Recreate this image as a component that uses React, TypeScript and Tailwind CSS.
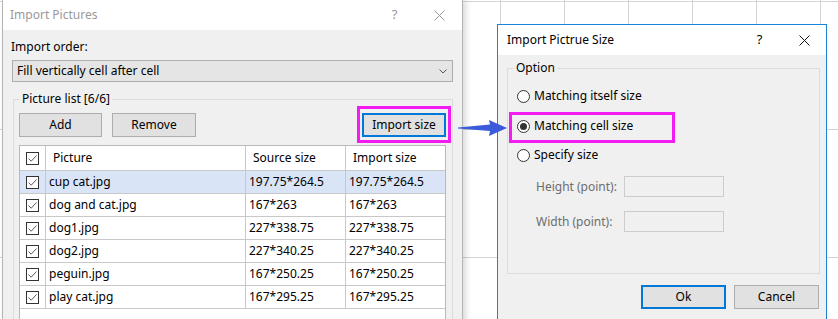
const ROWS = [
  { name: 'cup cat.jpg', source: '197.75*264.5', size: '197.75*264.5' },
  { name: 'dog and cat.jpg', source: '167*263', size: '167*263' },
  { name: 'dog1.jpg', source: '227*338.75', size: '227*338.75' },
  { name: 'dog2.jpg', source: '227*340.25', size: '227*340.25' },
  { name: 'peguin.jpg', source: '167*250.25', size: '167*250.25' },
  { name: 'play cat.jpg', source: '167*295.25', size: '167*295.25' },
];

const FONT = "font-['Noto_Sans','Open_Sans',sans-serif]";

function CheckBox() {
  return (
    <span className="flex h-[13px] w-[13px] items-center justify-center border border-[#333333] bg-white">
      <svg width="11" height="11" viewBox="0 0 11 11">
        <path d="M1.5 5.5 L4.2 8.2 L9.5 2.5" fill="none" stroke="#5a5a5a" strokeWidth="1" />
      </svg>
    </span>
  );
}

function Radio({ checked }: { checked?: boolean }) {
  return (
    <span className="flex h-[13px] w-[13px] shrink-0 items-center justify-center rounded-full border border-[#333333] bg-white">
      {checked && <span className="h-[7px] w-[7px] rounded-full bg-[#333333]" />}
    </span>
  );
}

function CloseIcon({ color }: { color: string }) {
  return (
    <svg width="11" height="11" viewBox="0 0 11 11">
      <path d="M0.5 0.5 L10.5 10.5 M10.5 0.5 L0.5 10.5" stroke={color} strokeWidth="1" />
    </svg>
  );
}

function Button({ label, active, width }: { label: string; active?: boolean; width: string }) {
  return (
    <div
      className={`flex h-[24px] ${width} items-center justify-center bg-[#e1e1e1] text-[12px] text-black ${
        active ? 'border-2 border-[#0078d7]' : 'border border-[#adadad]'
      }`}
    >
      {label}
    </div>
  );
}

/** Background spreadsheet grid, drawn behind the dialogs */
function SheetGrid() {
  const cols = [500, 564, 628, 692, 756, 820];
  const rows = [1, 129, 257];
  return (
    <svg className="absolute inset-0" width="838" height="319">
      {cols.map((x) => (
        <line key={x} x1={x + 0.5} y1="0" x2={x + 0.5} y2="319" stroke="#d4d4d4" />
      ))}
      {rows.map((y) => (
        <line key={y} x1="0" y1={y + 0.5} x2="838" y2={y + 0.5} stroke="#d4d4d4" />
      ))}
    </svg>
  );
}

function ImportPicturesDialog() {
  return (
    <div className="absolute left-[2px] top-0 flex h-[340px] w-[461px] flex-col border-x border-[#b4b4b4] bg-[#f0f0f0] shadow-[3px_0_6px_rgba(0,0,0,0.15)]">
      <div className="flex h-[30px] shrink-0 items-center bg-white">
        <span className="pl-[7px] text-[12px] text-[#999999]">Import Pictures</span>
        <span className="ml-auto flex w-[45px] justify-center text-[13px] text-[#999999]">?</span>
        <span className="flex w-[45px] justify-center">
          <CloseIcon color="#999999" />
        </span>
      </div>

      <div className="pl-[8px] pt-[9px] text-[12px] leading-[16px] text-black">Import order:</div>
      <div className="ml-[9px] mt-[5px] flex h-[22px] w-[441px] items-center border border-[#adadad] bg-[#e5e5e5] pl-[4px] text-[12px] text-black">
        Fill vertically cell after cell
        <svg className="ml-auto mr-[5px]" width="8" height="5" viewBox="0 0 8 5">
          <path d="M0.5 0.5 L4 4 L7.5 0.5" fill="none" stroke="#555555" strokeWidth="1" />
        </svg>
      </div>

      <div className="relative ml-[10px] mt-[17px] flex w-[440px] flex-1 flex-col border border-[#dcdcdc] pl-[5px] pr-[5px] pt-[13px]">
        <span className="absolute left-[6px] top-[-9px] bg-[#f0f0f0] px-[2px] text-[12px] leading-[16px] text-black">
          Picture list [6/6]
        </span>
        <div className="flex items-center">
          <Button label="Add" width="w-[83px]" />
          <div className="ml-[10px]">
            <Button label="Remove" width="w-[84px]" />
          </div>
          <div className="ml-auto mr-[1px]">
            <Button label="Import size" active width="w-[84px]" />
          </div>
        </div>

        <div className="mt-[8px] flex w-[427px] flex-1 flex-col border border-[#b9b9b9] bg-white text-[12px] text-black">
          <div className="flex h-[25px] border-b border-[#c8c8c8]">
            <div className="flex w-[26px] items-center justify-center border-r border-[#c8c8c8]">
              <CheckBox />
            </div>
            <div className="flex w-[200px] items-center border-r border-[#c8c8c8] pl-[7px]">Picture</div>
            <div className="flex w-[100px] items-center border-r border-[#c8c8c8] pl-[7px]">Source size</div>
            <div className="flex flex-1 items-center pl-[7px]">Import size</div>
          </div>
          {ROWS.map((r, i) => (
            <div key={r.name} className={`flex h-[23px] border-b border-[#c8c8c8] ${i === 0 ? 'bg-[#d9e5f7]' : ''}`}>
              <div className="flex w-[26px] items-center justify-center border-r border-[#c8c8c8]">
                <CheckBox />
              </div>
              <div className="flex w-[200px] items-center border-r border-[#c8c8c8] pl-[3px]">{r.name}</div>
              <div className="flex w-[100px] items-center border-r border-[#c8c8c8] pl-[3px]">{r.source}</div>
              <div className="flex flex-1 items-center pl-[3px]">{r.size}</div>
            </div>
          ))}
        </div>
      </div>
    </div>
  );
}

function SizeDialog() {
  return (
    <div className="absolute left-[497px] top-[24px] flex h-[310px] w-[330px] flex-col border border-[#1883d7] bg-[#f0f0f0] text-[12px] text-black">
      <div className="flex h-[30px] shrink-0 items-center bg-white">
        <span className="pl-[9px]">Import Pictrue Size</span>
        <span className="ml-auto flex w-[45px] justify-center text-[13px]">?</span>
        <span className="flex w-[44px] justify-center">
          <CloseIcon color="#111111" />
        </span>
      </div>

      <div className="relative ml-[9px] mt-[13px] flex h-[206px] w-[313px] flex-col border border-[#dcdcdc] pl-[9px] pt-[17px]">
        <span className="absolute left-[6px] top-[-9px] bg-[#f0f0f0] px-[2px] leading-[16px]">Option</span>
        <div className="flex h-[20px] items-center gap-[4px]">
          <Radio />
          Matching itself size
        </div>
        <div className="mt-[10px] flex h-[20px] items-center gap-[4px]">
          <Radio checked />
          Matching cell size
        </div>
        <div className="mt-[9px] flex h-[20px] items-center gap-[4px]">
          <Radio />
          Specify size
        </div>
        <div className="mt-[11px] flex h-[21px] items-center pl-[19px] text-[#6d6d6d]">
          <span className="w-[88px]">Height (point):</span>
          <span className="h-[21px] w-[100px] border border-[#cccccc] bg-[#f0f0f0]" />
        </div>
        <div className="mt-[14px] flex h-[21px] items-center pl-[19px] text-[#6d6d6d]">
          <span className="w-[88px]">Width (point):</span>
          <span className="h-[21px] w-[100px] border border-[#cccccc] bg-[#f0f0f0]" />
        </div>
      </div>

      <div className="ml-[143px] mt-[11px] flex gap-[8px]">
        <Button label="Ok" active width="w-[85px]" />
        <Button label="Cancel" width="w-[85px]" />
      </div>
    </div>
  );
}

export default function App() {
  return (
    <div className={`relative h-[319px] w-[838px] overflow-hidden bg-white ${FONT}`}>
      <SheetGrid />
      <ImportPicturesDialog />
      <SizeDialog />

      {/* annotation highlights */}
      <div className="absolute left-[357px] top-[106px] h-[37px] w-[94px] border-[3px] border-[#f21bf2]" />
      <div className="absolute left-[509px] top-[112px] h-[31px] w-[166px] border-[3px] border-[#f21bf2]" />
      <svg className="absolute left-[455px] top-[115px]" width="56" height="26" viewBox="0 0 56 26">
        <path d="M3 12.5 L35 9.5 L34 5 L52 13 L34 21 L35 16 L3 13.5 Z" fill="#3b5bdb" />
      </svg>
    </div>
  );
}
